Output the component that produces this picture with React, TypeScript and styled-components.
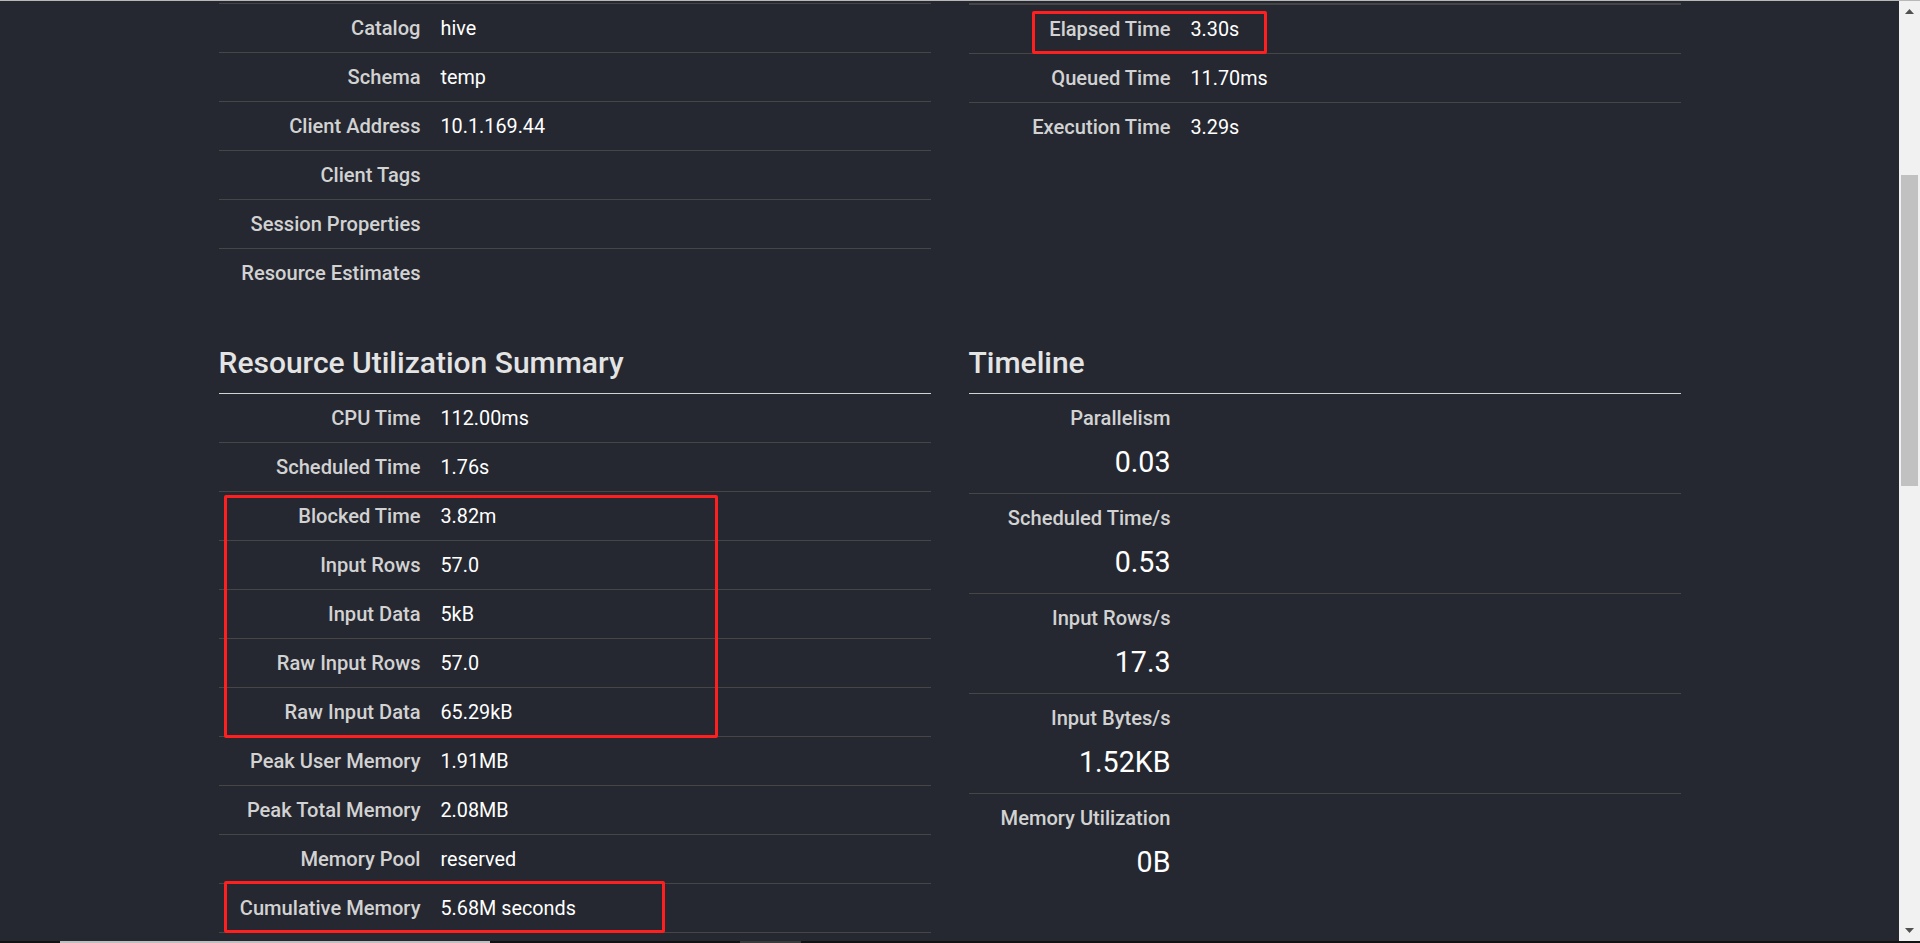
import React from 'react';
import styled, { createGlobalStyle } from 'styled-components';

const GlobalStyle = createGlobalStyle`
  html, body {
    margin: 0;
    padding: 0;
    background: #252831;
    overflow: hidden;
  }
  body {
    font-family: Roboto, "Liberation Sans", Arial, sans-serif;
  }
`;

const Screen = styled.div`
  display: flex;
  flex-direction: column;
  width: 1920px;
  height: 943px;
  box-sizing: border-box;
  border-top: 1px solid #b8b8b8;
  background: #252831;
  overflow: hidden;
`;

const Viewport = styled.div`
  display: flex;
  flex: 1;
  min-height: 0;
`;

const Content = styled.div`
  flex: 1;
  overflow: hidden;
  padding-top: 2px;
`;

const Container = styled.div`
  width: 1462px;
  margin: 0 auto;
`;

const TwoCol = styled.div<{ $gap?: number }>`
  display: grid;
  grid-template-columns: 712px 712px;
  column-gap: 38px;
  align-items: start;
  margin-top: ${(p) => p.$gap ?? 0}px;
`;

const Heading = styled.h3`
  margin: 0;
  padding-bottom: 13px;
  border-bottom: 1px solid #d2d2d2;
  font-size: 30px;
  font-weight: 500;
  line-height: 34px;
  color: #e4e4e4;
`;

const Table = styled.div<{ $topRule?: boolean; $bottomRule?: boolean }>`
  display: flex;
  flex-direction: column;
  border-bottom: ${(p) => (p.$bottomRule ? '1px solid #464646' : 'none')};

  & > *:first-child {
    border-top: ${(p) => (p.$topRule ? '1px solid #464646' : 'none')};
  }
`;

const Row = styled.div`
  display: grid;
  grid-template-columns: 212px 1fr;
  align-items: center;
  height: 48px;
  box-sizing: content-box;
  border-top: 1px solid #464646;
  font-size: 19.8px;
`;

const Label = styled.div`
  text-align: right;
  padding-right: 10px;
  color: #d2d2d2;
  font-size: 20.1px;
  font-weight: 500;
  white-space: nowrap;
`;

const Value = styled.div`
  padding-left: 10px;
  color: #ffffff;
  white-space: nowrap;
`;

const Highlight = styled.div<{ $top: number; $bottom: number; $left: number; $width: number }>`
  position: relative;

  & > *:first-child {
    border-top: 1px solid #464646;
  }

  &::after {
    content: '';
    position: absolute;
    top: ${(p) => p.$top}px;
    bottom: ${(p) => p.$bottom}px;
    left: ${(p) => p.$left}px;
    width: ${(p) => p.$width}px;
    box-sizing: border-box;
    border: 3px solid #ff1f1f;
    border-radius: 2px;
    pointer-events: none;
  }
`;

const TimelineRow = styled.div`
  display: grid;
  grid-template-columns: 212px;
  grid-template-rows: 48px 40px;
  padding-bottom: 11px;
  border-top: 1px solid #464646;

  &:first-child {
    border-top: none;
  }
`;

const TimelineLabel = styled.div`
  display: flex;
  align-items: center;
  justify-content: flex-end;
  padding-right: 10px;
  font-size: 20.1px;
  font-weight: 500;
  color: #d2d2d2;
  white-space: nowrap;
`;

const TimelineValue = styled.div`
  display: flex;
  align-items: center;
  justify-content: flex-end;
  padding-right: 10px;
  font-size: 28.6px;
  color: #ffffff;
`;

const Scrollbar = styled.div`
  flex: none;
  width: 21px;
  display: flex;
  flex-direction: column;
  align-items: center;
  background: #f1f1f1;
`;

const ScrollArrow = styled.div`
  flex: none;
  width: 100%;
  height: 21px;
  display: flex;
  align-items: center;
  justify-content: center;
`;

const Thumb = styled.div`
  flex: none;
  width: 17px;
  height: 311px;
  margin-top: 153px;
  background: #c1c1c1;
`;

const TrackRest = styled.div`
  flex: 1;
`;

const Taskbar = styled.div`
  flex: none;
  display: flex;
  height: 2px;
  background: #121212;
`;

const TaskbarItem = styled.div<{ $offset: number; $width: number; $color: string }>`
  flex: none;
  margin-left: ${(p) => p.$offset}px;
  width: ${(p) => p.$width}px;
  background: ${(p) => p.$color};
`;

type Pair = [string, string];

const sessionInfo: Pair[] = [
  ['Catalog', 'hive'],
  ['Schema', 'temp'],
  ['Client Address', '10.1.169.44'],
  ['Client Tags', ''],
  ['Session Properties', ''],
  ['Resource Estimates', ''],
];

const timingInfo: Pair[] = [
  ['Queued Time', '11.70ms'],
  ['Execution Time', '3.29s'],
];

const resourceHead: Pair[] = [
  ['CPU Time', '112.00ms'],
  ['Scheduled Time', '1.76s'],
];

const resourceInput: Pair[] = [
  ['Blocked Time', '3.82m'],
  ['Input Rows', '57.0'],
  ['Input Data', '5kB'],
  ['Raw Input Rows', '57.0'],
  ['Raw Input Data', '65.29kB'],
];

const resourceMemory: Pair[] = [
  ['Peak User Memory', '1.91MB'],
  ['Peak Total Memory', '2.08MB'],
  ['Memory Pool', 'reserved'],
];

const timeline: Pair[] = [
  ['Parallelism', '0.03'],
  ['Scheduled Time/s', '0.53'],
  ['Input Rows/s', '17.3'],
  ['Input Bytes/s', '1.52KB'],
  ['Memory Utilization', '0B'],
];

const InfoRow = ({ label, value }: { label: string; value: string }) => (
  <Row>
    <Label>{label}</Label>
    <Value>{value}</Value>
  </Row>
);

const Arrow = ({ down }: { down?: boolean }) => (
  <svg width="9" height="5" viewBox="0 0 9 5">
    <polygon points={down ? '0,0 9,0 4.5,5' : '0,5 4.5,0 9,5'} fill="#505050" />
  </svg>
);

export default function App() {
  return (
    <>
      <GlobalStyle />
      <Screen>
        <Viewport>
          <Content>
            <Container>
              <TwoCol>
                <Table $topRule>
                  {sessionInfo.map(([l, v]) => (
                    <InfoRow key={l} label={l} value={v} />
                  ))}
                </Table>
                <Table $topRule>
                  <Highlight $top={7} $bottom={-1} $left={63} $width={235}>
                    <InfoRow label="Elapsed Time" value="3.30s" />
                  </Highlight>
                  {timingInfo.map(([l, v]) => (
                    <InfoRow key={l} label={l} value={v} />
                  ))}
                </Table>
              </TwoCol>

              <TwoCol $gap={49}>
                <div>
                  <Heading>Resource Utilization Summary</Heading>
                  <Table $bottomRule>
                    {resourceHead.map(([l, v]) => (
                      <InfoRow key={l} label={l} value={v} />
                    ))}
                    <Highlight $top={4} $bottom={-2} $left={5} $width={494}>
                      {resourceInput.map(([l, v]) => (
                        <InfoRow key={l} label={l} value={v} />
                      ))}
                    </Highlight>
                    {resourceMemory.map(([l, v]) => (
                      <InfoRow key={l} label={l} value={v} />
                    ))}
                    <Highlight $top={-2} $bottom={-1} $left={5} $width={441}>
                      <InfoRow label="Cumulative Memory" value="5.68M seconds" />
                    </Highlight>
                  </Table>
                </div>
                <div>
                  <Heading>Timeline</Heading>
                  <div>
                    {timeline.map(([l, v]) => (
                      <TimelineRow key={l}>
                        <TimelineLabel>{l}</TimelineLabel>
                        <TimelineValue>{v}</TimelineValue>
                      </TimelineRow>
                    ))}
                  </div>
                </div>
              </TwoCol>
            </Container>
          </Content>
          <Scrollbar>
            <ScrollArrow>
              <Arrow />
            </ScrollArrow>
            <Thumb />
            <TrackRest />
            <ScrollArrow>
              <Arrow down />
            </ScrollArrow>
          </Scrollbar>
        </Viewport>
        <Taskbar>
          <TaskbarItem $offset={60} $width={430} $color="#bfbfbf" />
          <TaskbarItem $offset={250} $width={61} $color="#3a3a3a" />
        </Taskbar>
      </Screen>
    </>
  );
}
